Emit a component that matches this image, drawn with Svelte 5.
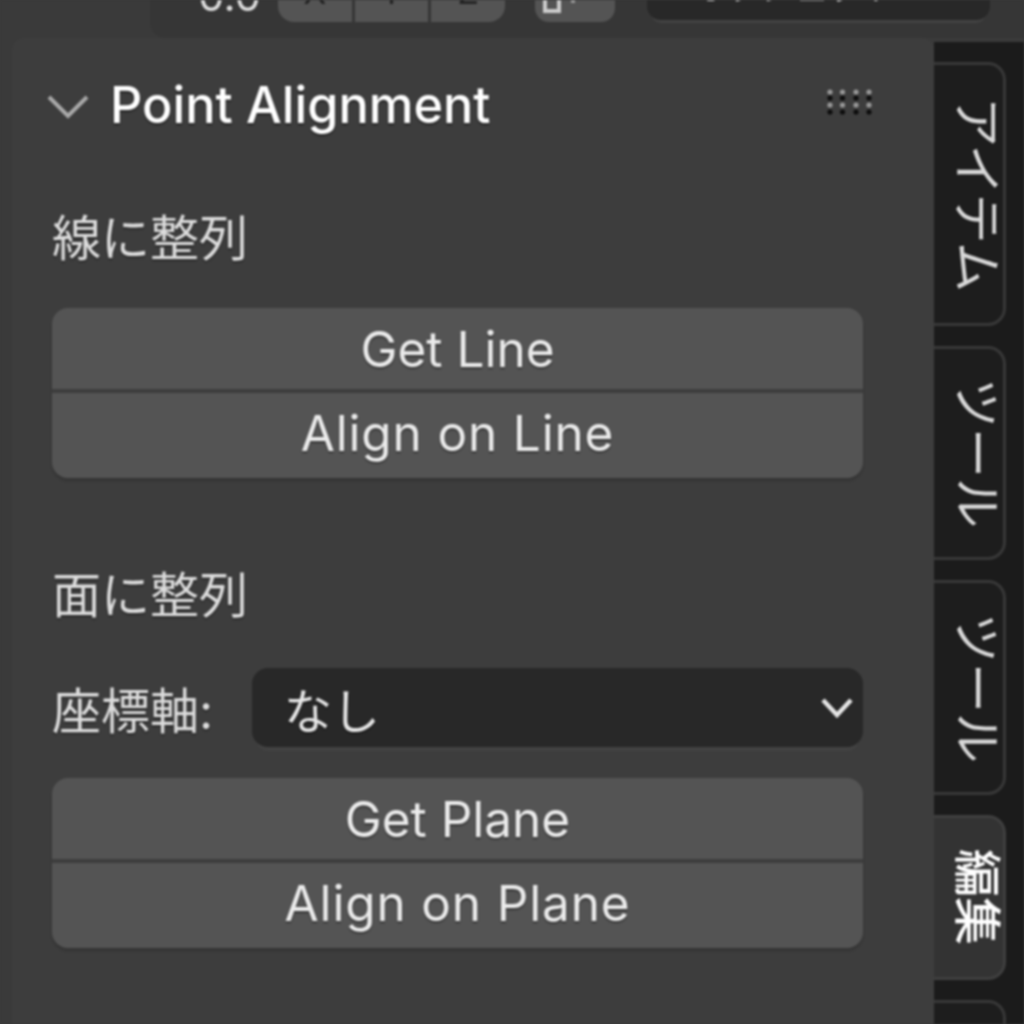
<script>
  const tabs = [
    { label: 'アイテム', height: 264 },
    { label: 'ツール', height: 214 },
    { label: 'ツール', height: 215 },
    { label: '編集', height: 165, active: true },
    { label: '', height: 60 }
  ]
  const gripCols = [5, 17.5, 31, 44]
</script>

<div class="screen">
  <div class="topbar">
    <span class="num">0.0</span>
    <div class="seg">
      <span>X</span>
      <span>Y</span>
      <span>Z</span>
    </div>
    <div class="snap">
      <svg width="50" height="22" viewBox="0 0 50 22"><rect x="10" y="-6" width="14" height="17" fill="none" stroke="#ccc" stroke-width="4"/><rect x="36" y="-2" width="4" height="5" fill="#999"/></svg>
    </div>
    <div class="field">オブジェクト</div>
  </div>

  <div class="main">
    <section class="panel">
      <header class="head">
        <svg class="caret" width="44" height="30" viewBox="0 0 44 30"><path d="M3 5 L22 24 L41 5" fill="none" stroke="#a9a9a9" stroke-width="4"/></svg>
        <h1>Point Alignment</h1>
        <svg class="grip" width="50" height="30" viewBox="0 0 50 30">
          {#each gripCols as x}
            <circle cx={x} cy="5" r="2.6" fill="#999"/>
            <circle cx={x} cy="11" r="2.6" fill="#0c0c0c"/>
            <circle cx={x} cy="18" r="2.6" fill="#999"/>
            <circle cx={x} cy="25" r="2.6" fill="#0c0c0c"/>
          {/each}
        </svg>
      </header>

      <h2 class="line-label">線に整列</h2>
      <div class="group">
        <button>Get Line</button>
        <button>Align on Line</button>
      </div>

      <h2 class="plane-label">面に整列</h2>
      <div class="axis">
        <span>座標軸:</span>
        <div class="select">
          なし
          <svg width="34" height="24" viewBox="0 0 34 24"><path d="M3 4 L17 19 L31 4" fill="none" stroke="#e6e6e6" stroke-width="4.5"/></svg>
        </div>
      </div>
      <div class="group">
        <button>Get Plane</button>
        <button>Align on Plane</button>
      </div>
    </section>

    <nav class="tabs">
      {#each tabs as tab}
        <div class="tab" class:active={tab.active} style="height: {tab.height}px">{tab.label}</div>
      {/each}
    </nav>
  </div>
</div>

<style>
  :global(body) {
    background: #3a3a3a;
  }

  .screen {
    width: 1024px;
    height: 1024px;
    overflow: hidden;
    background: #3a3a3a;
    color: #e6e6e6;
    font-family: Inter, "Noto Sans CJK JP", sans-serif;
    filter: blur(1px);
  }

  .topbar {
    height: 38px;
    margin-left: 150px;
    padding: 0 34px 16px 48px;
    box-sizing: border-box;
    display: flex;
    align-items: flex-end;
    background: #363636;
    border-radius: 0 0 0 16px;
    overflow: hidden;
  }

  .num {
    font-size: 42px;
    line-height: 42px;
    width: 80px;
    flex: none;
    color: #ddd;
    margin-bottom: 5px;
  }

  .seg {
    display: flex;
    flex: none;
    gap: 3px;
    width: 227px;
    height: 60px;
    border-radius: 0 0 16px 16px;
    overflow: hidden;
  }

  .seg span {
    flex: 1;
    background: #545454;
    text-align: center;
    font-size: 34px;
    line-height: 60px;
    color: #222;
  }

  .snap {
    flex: none;
    width: 80px;
    height: 22px;
    margin-left: 30px;
    background: #545454;
    border-radius: 0 0 14px 14px;
  }

  .field {
    flex: none;
    width: 343px;
    height: 60px;
    margin-left: 32px;
    margin-bottom: 2px;
    padding-left: 46px;
    box-sizing: border-box;
    background: #282828;
    border-radius: 0 0 14px 14px;
    box-shadow: 0 7px 0 -4px #424242;
    font-size: 34px;
    line-height: 56px;
    color: #ddd;
  }

  .main {
    display: flex;
    height: 986px;
  }

  .panel {
    width: 922px;
    margin-left: 12px;
    padding: 4px 71px 0 40px;
    box-sizing: border-box;
    background: #3d3d3d;
    border-radius: 12px 12px 0 0;
  }

  .head {
    display: flex;
    align-items: center;
    height: 126px;
  }

  .caret {
    flex: none;
    margin-left: -6px;
    margin-right: 20px;
    margin-top: 4px;
  }

  h1 {
    flex: 1;
    margin: 0;
    font-size: 50.4px;
    font-weight: 500;
    line-height: 60px;
    color: #fff;
    white-space: nowrap;
    text-shadow: 0 2px 2px rgba(0, 0, 0, 0.4);
  }

  .grip {
    flex: none;
    margin-right: -12px;
    margin-top: -6px;
  }

  h2 {
    margin: 0;
    font-size: 49px;
    font-weight: 400;
    line-height: 60px;
    color: #dcdcdc;
    text-shadow: 0 2px 2px rgba(0, 0, 0, 0.3);
  }

  .line-label {
    margin-top: 41px;
    margin-bottom: 39px;
  }

  .plane-label {
    margin-top: 88px;
    margin-bottom: 42px;
  }

  .group {
    display: flex;
    flex-direction: column;
    gap: 4px;
    border-radius: 16px;
    overflow: hidden;
    box-shadow: 0 3px 3px rgba(0, 0, 0, 0.15);
  }

  button {
    display: block;
    height: 81px;
    padding: 0;
    border: 0;
    background: #545454;
    color: #ebebeb;
    font-family: inherit;
    font-size: 49.5px;
    text-align: center;
    text-shadow: 0 2px 2px rgba(0, 0, 0, 0.35);
  }

  button:last-child {
    height: 85px;
    padding-bottom: 5px;
    letter-spacing: 0.85px;
  }

  .axis {
    display: flex;
    align-items: center;
    height: 79px;
    margin-bottom: 31px;
    font-size: 49px;
    color: #dcdcdc;
    text-shadow: 0 2px 2px rgba(0, 0, 0, 0.3);
  }

  .axis > span {
    width: 200px;
    flex: none;
  }

  .select {
    flex: 1;
    height: 79px;
    display: flex;
    align-items: center;
    justify-content: space-between;
    padding: 0 9px 0 32px;
    box-sizing: border-box;
    background: #282828;
    border-radius: 16px;
    box-shadow: 0 8px 0 -4px #424242;
    color: #e6e6e6;
    font-size: 48px;
  }

  .tabs {
    width: 90px;
    background: #1b1b1b;
    margin-top: 4px;
    padding-top: 20px;
    display: flex;
    flex-direction: column;
    gap: 20px;
    flex: none;
    box-sizing: border-box;
    height: 982px;
    overflow: hidden;
  }

  .tab {
    flex: none;
    width: 72px;
    padding-left: 24px;
    box-sizing: border-box;
    border: 3px solid #383838;
    border-left: 0;
    border-radius: 0 18px 18px 0;
    background: #1d1d1d;
    writing-mode: vertical-rl;
    text-orientation: sideways;
    display: flex;
    align-items: center;
    justify-content: center;
    font-size: 50px;
    color: #d8d8d8;
  }

  .tab.active {
    background: #333;
    border-color: #3f3f3f;
    color: #fff;
    font-size: 48px;
    font-weight: 500;
  }
</style>
